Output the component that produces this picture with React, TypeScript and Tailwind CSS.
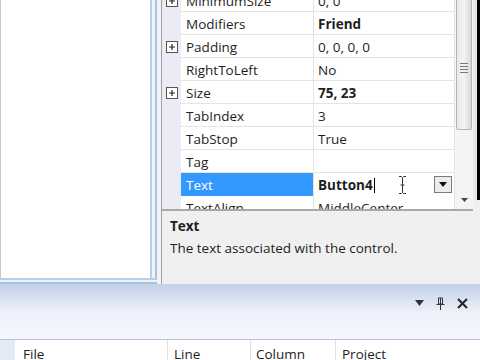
import React from 'react'

const rows = [
  { name: 'MinimumSize', value: '0, 0', plus: true },
  { name: 'Modifiers', value: 'Friend', bold: true },
  { name: 'Padding', value: '0, 0, 0, 0', plus: true },
  { name: 'RightToLeft', value: 'No' },
  { name: 'Size', value: '75, 23', bold: true, plus: true },
  { name: 'TabIndex', value: '3' },
  { name: 'TabStop', value: 'True' },
  { name: 'Tag', value: '' },
  { name: 'Text', value: 'Button4', bold: true, selected: true },
  { name: 'TextAlign', value: 'MiddleCenter' },
]

const PlusBox = () => (
  <svg width="12" height="12" viewBox="0 0 12 12">
    <rect x="0.5" y="0.5" width="11" height="11" fill="#fff" stroke="#555" />
    <path d="M3 6h6M6 3v6" stroke="#222" strokeWidth="1.2" />
  </svg>
)

const font = { fontFamily: '"Open Sans", "Noto Sans", sans-serif' }

export default function App() {
  return (
    <div
      className="relative flex h-[360px] w-[480px] flex-col overflow-hidden bg-white text-[13.5px] text-[#1e1e1e]"
      style={font}
    >
      {/* top: designer surface + property grid */}
      <div className="flex h-[284px] shrink-0">
        <div className="flex h-full w-[157px] shrink-0 flex-col">
          <div className="flex flex-1">
            <div className="flex-1 border-l border-[#c8c8c8] bg-white" />
            <div className="w-[2px] bg-[#b9cde8]" />
            <div className="w-[3px] bg-[#eef3fa]" />
            <div className="w-[2px] bg-[#a9c2e2]" />
          </div>
          <div className="h-[2px] bg-[#b9cde8]" />
          <div className="h-[2px] bg-[#eef3fa]" />
          <div className="h-[2px] bg-[#a9c2e2]" />
        </div>
        <div className="w-[4px] shrink-0 bg-[#f3f3f3]" />

        <div className="flex w-[312px] shrink-0 flex-col border-l border-[#a0a0a0]">
          <div className="flex h-[209px] shrink-0">
            <div className="flex w-[292px] flex-col overflow-hidden">
              <div className="-mt-[11px] flex flex-col">
                {rows.map((r) => (
                  <div key={r.name} className="flex h-[23px] shrink-0">
                    <div className="flex w-[19px] shrink-0 items-center justify-center bg-[#ebebf5]">
                      {r.plus && <PlusBox />}
                    </div>
                    <div
                      className={
                        r.selected
                          ? 'flex w-[133px] shrink-0 items-center border-r border-[#e4e4e4] bg-[#3399ff] pl-[5px] pt-[2px] text-white'
                          : 'flex w-[133px] shrink-0 items-center border-r border-b border-[#e4e4e4] pl-[5px] pt-[2px]'
                      }
                    >
                      {r.name}
                    </div>
                    <div
                      className={
                        r.selected
                          ? 'relative flex flex-1 items-center pl-[4px] pt-[2px] font-bold'
                          : 'flex flex-1 items-center border-b border-[#e4e4e4] pl-[4px] pt-[2px]' +
                            (r.bold ? ' font-bold' : '')
                      }
                    >
                      {r.value}
                      {r.selected && (
                        <>
                          <span className="ml-[1px] h-[15px] w-[1px] bg-black" />
                          <svg className="absolute left-[84px] top-[2px]" width="9" height="20" viewBox="0 0 9 20">
                            <path d="M1 1.5h2.5l1 1 1-1H8M4.5 2.5v15M1 18.5h2.5l1-1 1 1H8M2.5 10h4" stroke="#333" strokeWidth="1" fill="none" />
                          </svg>
                          <div className="absolute right-[2px] top-[3px] flex h-[17px] w-[18px] items-center justify-center border border-[#7a7a7a] bg-[#ececec]">
                            <svg width="8" height="5" viewBox="0 0 8 5">
                              <path d="M0 0h8L4 5z" fill="#111" />
                            </svg>
                          </div>
                        </>
                      )}
                    </div>
                  </div>
                ))}
              </div>
            </div>
            {/* scrollbar */}
            <div className="relative flex w-[19px] shrink-0 flex-col border-l border-[#e6e6e6] bg-[#f4f4f4]">
              <div className="mx-[1px] flex h-[130px] items-center justify-center rounded-b-[2px] border border-t-0 border-[#b4b4b4] bg-gradient-to-r from-[#e8e8e8] via-[#f4f4f4] to-[#d8d8d8]">
                <div className="flex flex-col gap-[2px] pt-[6px]">
                  <div className="h-[1px] w-[8px] bg-[#777]" />
                  <div className="h-[1px] w-[8px] bg-[#777]" />
                  <div className="h-[1px] w-[8px] bg-[#777]" />
                  <div className="h-[1px] w-[8px] bg-[#777]" />
                </div>
              </div>
              <div className="flex-1" />
              <div className="flex h-[18px] items-center justify-center">
                <svg width="7" height="4" viewBox="0 0 7 4">
                  <path d="M0 0h7L3.5 4z" fill="#444" />
                </svg>
              </div>
            </div>
          </div>
          {/* description */}
          <div className="flex flex-1 flex-col border-t-2 border-[#a8a8a8] bg-[#f0f0f0] px-[8px] pt-[4px]">
            <div className="font-bold leading-[22px]">Text</div>
            <div className="leading-[22px]">The text associated with the control.</div>
          </div>
        </div>
        <div className="flex flex-1 flex-col">
          <div className="flex h-[200px] bg-[#e6e6e6]">
            <div className="flex-1" />
            <div className="w-[3px] bg-black" />
          </div>
          <div className="flex-1 bg-[#f0f0f0]" />
        </div>
      </div>

      {/* bottom tool window title */}
      <div className="flex h-[56px] shrink-0 flex-col border-t border-[#c7d2e6] bg-gradient-to-b from-[#c5d1ea] via-[#edf1f9] to-[#f6f8fc]">
        <div className="flex h-[34px] items-center justify-end gap-[12px] pr-[12px] pt-[2px]">
          <svg width="9" height="6" viewBox="0 0 9 6">
            <path d="M0 0h9L4.5 6z" fill="#333" />
          </svg>
          <svg width="9" height="13" viewBox="0 0 9 13">
            <path d="M2.5 1h4v6h-4zM4.5 1v6M0.5 7.5h8M4.5 8v5" stroke="#333" strokeWidth="1" fill="none" />
          </svg>
          <svg width="11" height="11" viewBox="0 0 11 11">
            <path d="M1 1l9 9M10 1l-9 9" stroke="#222" strokeWidth="2" />
          </svg>
        </div>
        <div className="flex-1" />
        <div className="h-[1px] bg-[#b8c3d8]" />
      </div>

      {/* error list header */}
      <div className="flex flex-1">
        <div className="w-[15px] shrink-0 bg-[#e4eaf4]" />
        <div className="flex flex-1 items-end text-[13.5px] leading-[14px]">
          <div className="w-[153px] border-r border-[#e2e2e2] pl-[8px] pt-[7px]">File</div>
          <div className="w-[83px] border-r border-[#e2e2e2] pl-[6px] pt-[7px]">Line</div>
          <div className="w-[85px] border-r border-[#e2e2e2] pl-[5px] pt-[7px]">Column</div>
          <div className="flex-1 pl-[6px] pt-[7px]">Project</div>
        </div>
      </div>
    </div>
  )
}
